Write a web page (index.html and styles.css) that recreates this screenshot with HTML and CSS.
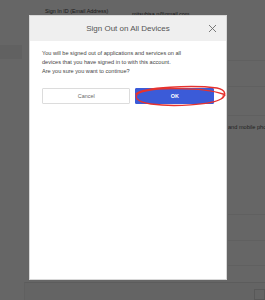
FILE: index.html
```html
<!DOCTYPE html>
<html>
<head>
<meta charset="utf-8">
<link rel="stylesheet" href="styles.css">
</head>
<body>
<div class="page">
  <div class="id-row">
    <span class="id-label">Sign In ID (Email Address)</span>
    <span class="id-value">mitsuhisa.n@gmail.com</span>
  </div>
  <div class="rows">
    <div class="side-tab"></div>
    <div class="row r1"></div>
    <div class="row r2"></div>
    <div class="row r3"><span class="row-text">and mobile phone</span></div>
    <div class="row r4"></div>
    <div class="row r5"></div>
    <div class="row r6"></div>
  </div>
  <div class="footer-bar"><span class="corner"></span></div>
</div>
<div class="overlay"></div>
<div class="modal">
  <div class="modal-head">
    <span class="modal-title">Sign Out on All Devices</span>
    <svg class="close" width="9" height="9" viewBox="0 0 9 9"><path d="M1 1L8 8M8 1L1 8" stroke="#6b6b6b" stroke-width="0.9" fill="none"/></svg>
  </div>
  <div class="modal-body">
    <p class="msg">You will be signed out of applications and services on all devices that you have signed in to with this account.<br>Are you sure you want to continue?</p>
    <div class="actions">
      <button class="btn cancel">Cancel</button>
      <button class="btn ok">OK</button>
      <svg class="mark" width="96" height="26" viewBox="0 0 96 26">
        <path d="M3 9 C 10 2, 60 0, 84 3 C 94 5, 93 11, 88 14 C 78 20, 40 22, 18 19 C 4 17, 0 12, 6 8 C 20 2, 70 2, 90 9 C 93 10, 92 11, 90 11" stroke="#e6322e" stroke-width="1.4" fill="none" stroke-linecap="round"/>
      </svg>
    </div>
  </div>
</div>
</body>
</html>
```
FILE: styles.css
```css
html, body {
  margin: 0;
  padding: 0;
}
body {
  width: 265px;
  height: 300px;
  overflow: hidden;
  background: #ffffff;
  font-family: "Liberation Sans", Arial, sans-serif;
  position: relative;
}
.page {
  width: 265px;
  height: 300px;
  display: flex;
  flex-direction: column;
}
.id-row {
  display: flex;
  align-items: flex-start;
  padding: 8px 0 0 45px;
  height: 12px;
  font-size: 5.4px;
  color: #444;
}
.id-label {
  width: 87px;
}
.id-value {
  padding-top: 3px;
  color: #333;
}
.rows {
  position: relative;
  flex: 1;
  display: flex;
  flex-direction: column;
}
.side-tab {
  position: absolute;
  left: 0;
  top: 25px;
  width: 22px;
  height: 14px;
  background: #f2f2f2;
}
.row {
  margin-left: 228px;
  border-top: 1px solid #f1f1f1;
  overflow: hidden;
}
.r1 { margin-top: 40px; height: 25px; }
.r2 { height: 28px; }
.r3 { height: 98px; }
.row-text {
  display: block;
  margin-top: 8px;
  font-size: 5.6px;
  color: #555;
  white-space: nowrap;
}
.r4 { height: 25px; }
.r5 { height: 24px; }
.r6 { height: 16px; }
.footer-bar {
  height: 18px;
  margin-left: 24px;
  border-top: 1px solid #e6e6e6;
  border-left: 1px solid #f0f0f0;
  background: #fbfbfb;
  position: relative;
}
.corner {
  position: absolute;
  right: 0;
  bottom: 0;
  width: 9px;
  height: 9px;
  border: 1px solid #ddd;
}
.overlay {
  position: absolute;
  inset: 0;
  background: rgba(0, 0, 0, 0.6);
}
.modal {
  position: absolute;
  left: 29px;
  top: 15px;
  width: 198px;
  height: 265px;
  background: #fff;
  border: 1px solid #d8d8d8;
  box-sizing: border-box;
  display: flex;
  flex-direction: column;
}
.modal-head {
  height: 25px;
  background: #efefef;
  position: relative;
  display: flex;
  align-items: center;
  justify-content: center;
}
.modal-title {
  font-size: 8px;
  color: #555;
}
.close {
  position: absolute;
  right: 9px;
  top: 8px;
}
.modal-body {
  padding: 8px 12px 0 12px;
}
.msg {
  margin: 0;
  max-width: 146px;
  font-size: 5.6px;
  line-height: 9px;
  color: #444;
}
.actions {
  position: relative;
  display: flex;
  gap: 5px;
  margin-top: 12px;
}
.btn {
  height: 16px;
  padding: 0;
  font-family: "Liberation Sans", Arial, sans-serif;
  font-size: 5.4px;
  border-radius: 1px;
}
.cancel {
  width: 89px;
  background: #fff;
  border: 1px solid #dcdcdc;
  color: #666;
}
.ok {
  width: 79px;
  background: #3b5bd8;
  border: 1px solid #3b5bd8;
  color: #fff;
  font-weight: bold;
}
.mark {
  position: absolute;
  left: 91px;
  top: -3px;
}
```
